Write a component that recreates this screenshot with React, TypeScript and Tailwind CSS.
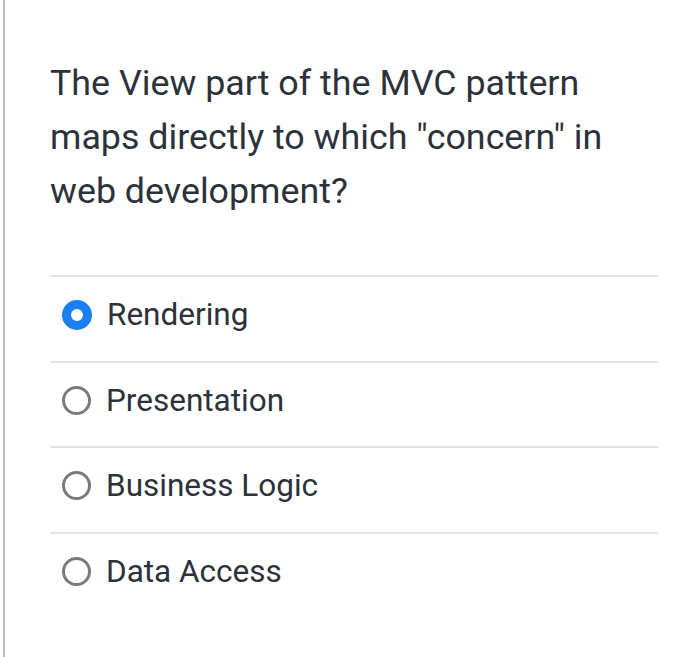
const options = ["Rendering", "Presentation", "Business Logic", "Data Access"];

function Radio({ checked }: { checked: boolean }) {
    if (checked) {
        return (
            <span className="w-[30px] h-[30px] rounded-full border-[9px] border-[#1a7ff0] bg-white shrink-0" />
        );
    }
    return (
        <span className="w-[29px] h-[29px] rounded-full border-[3px] border-[#7a7a7a] bg-white shrink-0" />
    );
}

export default function App() {
    const selected = 0;
    return (
        <div className="w-[700px] h-[657px] bg-white overflow-hidden">
            <div
                className="h-full ml-[3px] border-l-2 border-[#bdbdbd] pl-[45px] pr-[42px] pt-[56px] text-[#2c323a]"
                style={{ fontFamily: "Roboto, 'Liberation Sans', sans-serif" }}
            >
                <p className="text-[35.8px] leading-[54px] pr-[30px]">
                    The View part of the MVC pattern maps directly to which
                    "concern" in web development?
                </p>
                <div className="mt-[57px]">
                    {options.map((opt, i) => (
                        <label
                            key={opt}
                            className="flex items-center h-[85.5px] border-t-2 border-[#e3e3e3] pl-[12px] gap-[15px] pb-[8px]"
                        >
                            <Radio checked={i === selected} />
                            <span className="text-[31.5px] leading-none">{opt}</span>
                        </label>
                    ))}
                </div>
            </div>
        </div>
    );
}
